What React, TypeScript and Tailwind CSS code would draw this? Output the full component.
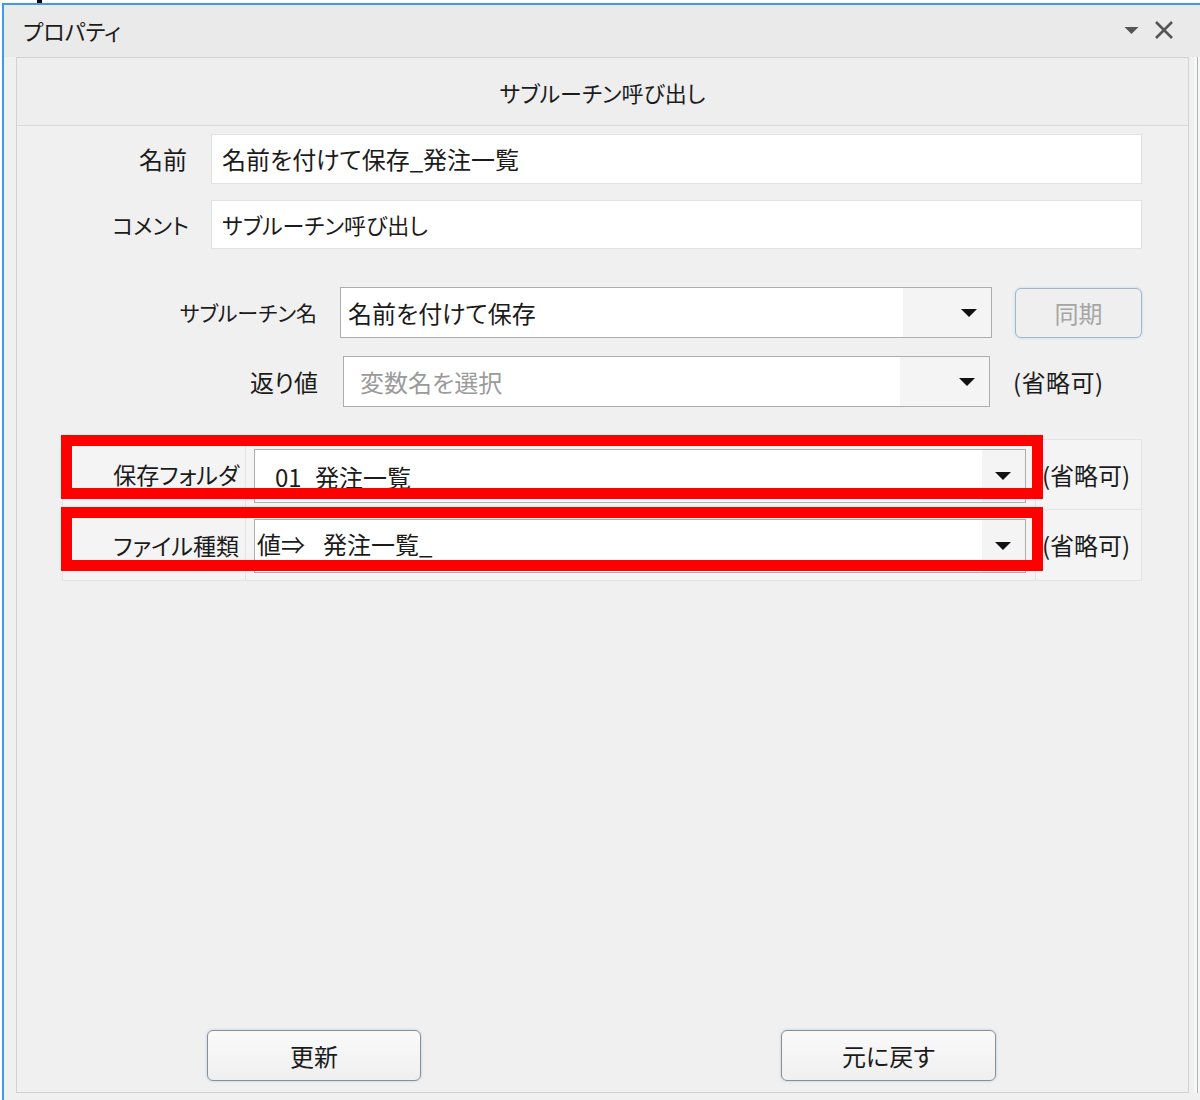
import React from "react";

function Arrow({ color = "#111", w = 16, h = 8 }: { color?: string; w?: number; h?: number }) {
  return (
    <svg width={w} height={h} viewBox="0 0 16 8">
      <path d="M0 0 L16 0 L8 8 Z" fill={color} />
    </svg>
  );
}

function Combo({
  children,
  placeholder,
  btnWidth,
  className,
  textClass,
}: {
  children: React.ReactNode;
  placeholder?: boolean;
  btnWidth: string;
  className: string;
  textClass: string;
}) {
  return (
    <div className={`flex border border-[#adadad] bg-white ${className}`}>
      <div
        className={`flex flex-1 items-center whitespace-nowrap ${textClass} ${
          placeholder ? "text-[#9b9b9b]" : "text-[#1b1b1b]"
        }`}
      >
        {children}
      </div>
      <div className={`flex items-center justify-end bg-[#f4f4f4] pr-[14px] ${btnWidth}`}>
        <Arrow />
      </div>
    </div>
  );
}

function PushButton({ label, width }: { label: string; width: string }) {
  return (
    <button
      className={`flex h-[51px] items-center justify-center rounded-[6px] border border-[#8e8e8e] bg-gradient-to-b from-[#fafafa] to-[#efefef] text-[24px] text-[#1b1b1b] shadow-[0_0_3px_#a9cdf0] ${width}`}
    >
      {label}
    </button>
  );
}

export default function App() {
  return (
    <div className="h-[1100px] w-[1200px] overflow-hidden bg-white font-['Noto_Sans_CJK_JP',sans-serif] text-[#1b1b1b] [font-feature-settings:'palt']">
      {/* fragment of the window above */}
      <div className="h-[3px] pl-[37px]">
        <div className="h-[3px] w-[5px] bg-black" />
      </div>

      <div className="ml-[2px] flex h-[1097px] flex-col border-l-[2px] border-t-[2px] border-[#3d9be9] bg-[#f0f0f0]">
        {/* title bar */}
        <div className="flex h-[52px] items-center justify-between bg-[#eaeaea] pb-[2px] pl-[19px] pr-[26px]">
          <span className="text-[22px] leading-none text-[#1b1b1b]">プロパティ</span>
          <div className="flex items-center gap-[14px]">
            <Arrow color="#555" w={17} h={7} />
            <svg width="20" height="18" viewBox="0 0 20 18">
              <path d="M2 1 L18 17 M18 1 L2 17" stroke="#555" strokeWidth="2.6" />
            </svg>
          </div>
        </div>

        <div className="flex flex-1 pb-[7px] pl-[12px]">
          {/* main panel */}
          <div className="flex w-[1173px] flex-col border border-[#d2d2d2] bg-[#f0f0f0]">
            <div className="flex h-[68px] items-center justify-center border-b border-[#dadada] bg-[#eeeeee] pt-[2px] text-[22px]">
              サブルーチン呼び出し
            </div>

            {/* name */}
            <div className="mt-[8px] flex items-center">
              <div className="w-[170px] text-right text-[24px]">名前</div>
              <div className="ml-[24px] flex h-[50px] w-[931px] items-center border border-[#e1e1e1] bg-white pl-[10px] text-[24px]">
                名前を付けて保存_発注一覧
              </div>
            </div>

            {/* comment */}
            <div className="mt-[16px] flex items-center">
              <div className="w-[172px] text-right text-[22px]">コメント</div>
              <div className="ml-[22px] flex h-[49px] w-[931px] items-center border border-[#e1e1e1] bg-white pl-[10px] text-[22px]">
                サブルーチン呼び出し
              </div>
            </div>

            {/* subroutine name */}
            <div className="mt-[38px] flex items-center">
              <div className="w-[300px] text-right text-[21px]">サブルーチン名</div>
              <Combo btnWidth="w-[88px]" className="ml-[23px] h-[51px] w-[652px]" textClass="pl-[7px] text-[24px]">
                名前を付けて保存
              </Combo>
              <button className="ml-[23px] flex h-[50px] w-[127px] items-center justify-center rounded-[6px] border border-[#a3b6ca] bg-[#efefef] text-[24px] text-[#a5a5a5] shadow-[0_0_3px_#bcd7f0]">
                同期
              </button>
            </div>

            {/* return value */}
            <div className="mt-[18px] flex items-center">
              <div className="w-[301px] text-right text-[24px]">返り値</div>
              <Combo
                placeholder
                btnWidth="w-[89px]"
                className="ml-[25px] h-[51px] w-[647px]"
                textClass="pl-[16px] text-[24px]"
              >
                変数名を選択
              </Combo>
              <span className="ml-[23px] text-[24px] tracking-[0.5px]">(省略可)</span>
            </div>

            {/* parameter grid */}
            <div className="relative ml-[45px] mt-[32px] w-[1080px]">
              <div className="grid grid-cols-[183px_790px_107px] grid-rows-[70px_70px] border border-[#e3e3e3] bg-[#f4f4f4]">
                <div className="flex items-center justify-end border-b border-r border-[#e3e3e3] pr-[6px] text-[23px]">
                  保存フォルダ
                </div>
                <div className="border-b border-r border-[#e3e3e3] pl-[8px] pt-[9px]">
                  <Combo btnWidth="w-[43px]" className="h-[54px] w-[772px]" textClass="pl-[20px] pt-[2px] text-[24px]">
                    01_発注一覧
                  </Combo>
                </div>
                <div className="flex items-center border-b border-[#e3e3e3] pl-[6px] text-[24px]">(省略可)</div>

                <div className="flex items-center justify-end border-r border-[#e3e3e3] pr-[6px] text-[23px]">
                  ファイル種類
                </div>
                <div className="border-r border-[#e3e3e3] pl-[8px] pt-[9px]">
                  <Combo btnWidth="w-[43px]" className="h-[54px] w-[772px]" textClass="pb-[4px] pl-[2px] text-[24px]">
                    <span>値⇒</span>
                    <span className="ml-[18px]">発注一覧_</span>
                  </Combo>
                </div>
                <div className="flex items-center pl-[6px] text-[24px]">(省略可)</div>
              </div>

              {/* red annotation frames */}
              <div className="absolute left-[-1px] top-[-4px] h-[64px] w-[982px] border-[11px] border-[#ff0000]" />
              <div className="absolute left-[-1px] top-[68px] h-[64px] w-[982px] border-[11px] border-[#ff0000]" />
            </div>

            <div className="flex-1" />

            {/* action buttons */}
            <div className="flex pb-[11px] pl-[190px]">
              <PushButton label="更新" width="w-[214px]" />
              <div className="w-[360px]" />
              <PushButton label="元に戻す" width="w-[215px]" />
            </div>
          </div>

          <div className="ml-[5px] w-[3px] bg-[#f7f7f7]" />
          <div className="w-[1px] bg-[#aab2ba]" />
          <div className="flex-1 bg-[#f7f7f7]" />
        </div>
      </div>
    </div>
  );
}
